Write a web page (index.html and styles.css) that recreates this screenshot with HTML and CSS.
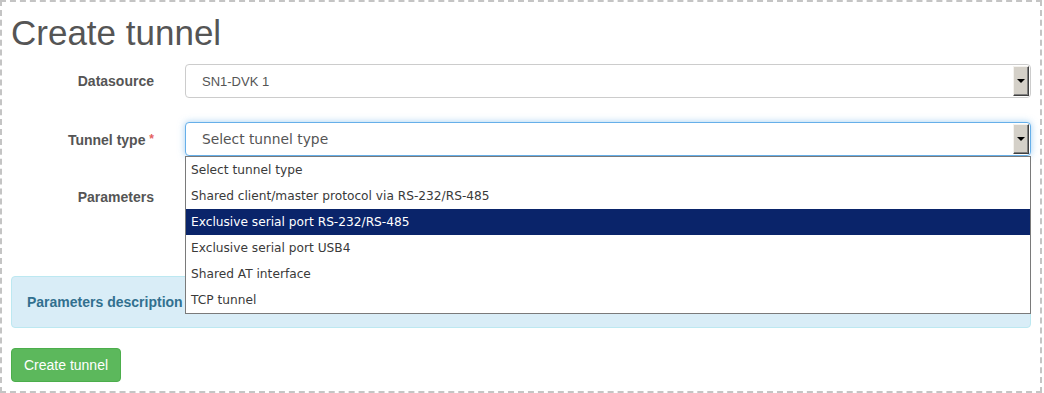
FILE: index.html
```html
<!DOCTYPE html>
<html lang="en">
<head>
    <meta charset="UTF-8">
    <title>Create tunnel</title>
    <link rel="stylesheet" href="styles.css">
</head>
<body>

    <div class="page">
        <h1 class="title">Create tunnel</h1>

        <div class="form-row">
            <label class="form-label">Datasource</label>
            <div class="form-control">
                <div class="select">
                    <span class="select-value">SN1-DVK 1</span>
                    <span class="select-btn"><span class="arrow"></span></span>
                </div>
            </div>
        </div>

        <div class="form-row">
            <label class="form-label">Tunnel type <span class="required">*</span></label>
            <div class="form-control">
                <div class="select select-focus">
                    <span class="select-value select-value-wide">Select tunnel type</span>
                    <span class="select-btn"><span class="arrow"></span></span>
                </div>
                <ul class="dropdown">
                    <li>Select tunnel type</li>
                    <li>Shared client/master protocol via RS-232/RS-485</li>
                    <li class="active">Exclusive serial port RS-232/RS-485</li>
                    <li>Exclusive serial port USB4</li>
                    <li>Shared AT interface</li>
                    <li>TCP tunnel</li>
                </ul>
            </div>
        </div>

        <div class="form-row form-row-params">
            <label class="form-label">Parameters</label>
            <div class="form-control"></div>
        </div>

        <div class="alert">Parameters description</div>

        <button class="btn-create">Create tunnel</button>
    </div>

</body>
</html>
```

FILE: styles.css
```css
body {
    margin: 0;
    font-family: "Liberation Sans", Arial, sans-serif;
    font-size: 14px;
    color: #555;
    background-color: #fff;
    overflow: hidden;
}
.page {
    box-sizing: border-box;
    width: 1042px;
    height: 393px;
    border: 2px dashed #c4c4c4;
    padding: 11px 9px 0 9px;
}
.title {
    margin: 0 0 11px 0;
    font-size: 35px;
    font-weight: normal;
    line-height: 40px;
    color: #555;
}
.form-row {
    display: grid;
    grid-template-columns: 159px 1fr;
    margin-bottom: 24px;
}
.form-row-params {
    margin-bottom: 20px;
}
.form-row-params .form-control {
    min-height: 76px;
}
.form-label {
    padding: 7px 16px 0 0;
    line-height: 20px;
    font-weight: bold;
    text-align: right;
    color: #555;
}
.required {
    color: #e4605e;
    font-size: 12px;
    vertical-align: 2px;
}
.form-control {
    position: relative;
    padding-left: 15px;
}
.select {
    box-sizing: border-box;
    height: 34px;
    display: flex;
    align-items: center;
    justify-content: space-between;
    border: 1px solid #ccc;
    border-radius: 4px;
    padding: 0 1px 0 16px;
    background-color: #fff;
}
.select-focus {
    border-color: #66afe9;
    box-shadow: 0 0 7px rgba(102, 175, 233, 0.6);
}
.select-value {
    font-size: 13px;
    color: #555;
}
.select-value-wide {
    font-family: "DejaVu Sans", sans-serif;
    font-size: 13.8px;
}
.select-btn {
    box-sizing: border-box;
    width: 16px;
    height: 30px;
    display: flex;
    align-items: center;
    justify-content: center;
    background-color: #d4d0c8;
    border-top: 1px solid #f4f2ee;
    border-left: 1px solid #f4f2ee;
    border-right: 1px solid #404040;
    border-bottom: 1px solid #404040;
    box-shadow: inset -1px -1px 0 #808080;
}
.arrow {
    width: 0;
    height: 0;
    border-left: 4px solid transparent;
    border-right: 4px solid transparent;
    border-top: 4px solid #000;
}
.dropdown {
    position: absolute;
    top: 34px;
    left: 15px;
    right: 0;
    margin: 0;
    padding: 0;
    list-style: none;
    border: 1px solid #7a7a7a;
    background-color: #fff;
    font-family: "DejaVu Sans", sans-serif;
    font-size: 12.2px;
    color: #3a3a3a;
    z-index: 10;
}
.dropdown li {
    height: 26px;
    line-height: 26px;
    padding-left: 5px;
}
.dropdown .active {
    background-color: #0a246a;
    color: #fff;
}
.alert {
    box-sizing: border-box;
    height: 52px;
    padding: 15px;
    line-height: 20px;
    font-weight: bold;
    color: #31708f;
    background-color: #d9edf7;
    border: 1px solid #bce8f1;
    border-radius: 4px;
}
.btn-create {
    margin-top: 20px;
    padding: 6px 12px;
    font-family: "Liberation Sans", Arial, sans-serif;
    font-size: 14px;
    line-height: 20px;
    color: #fff;
    background-color: #5cb85c;
    border: 1px solid #4cae4c;
    border-radius: 4px;
}
```
